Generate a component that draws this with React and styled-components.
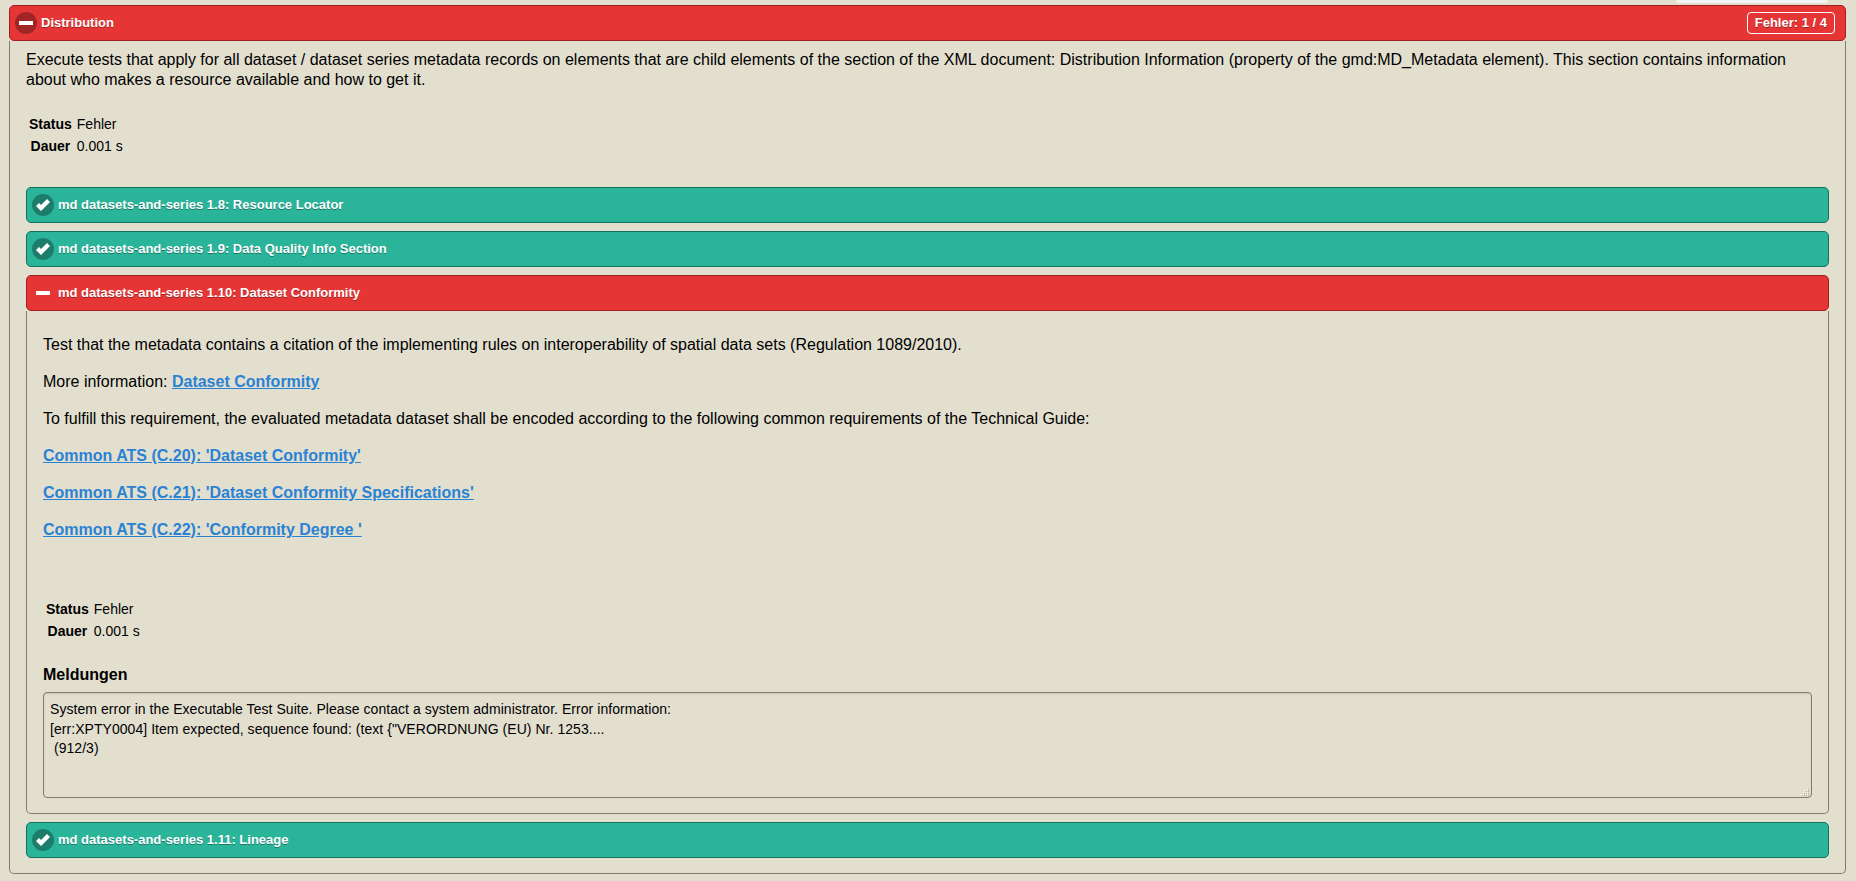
import React from "react";
import styled, { createGlobalStyle } from "styled-components";

const Global = createGlobalStyle`
  html, body { margin: 0; padding: 0; background: #e3dfcf; }
  body { font-family: "Liberation Sans", Arial, sans-serif; font-size: 16px; color: #000; overflow: hidden; }
`;

const Page = styled.div`
  height: 881px;
  padding: 0 10px 0 9px;
  box-sizing: border-box;
`;

const TopStrip = styled.div`
  height: 5px;
  display: flex;
  justify-content: flex-end;
`;

const Notice = styled.div`
  width: 152px;
  height: 3px;
  margin-right: 18px;
  background: #f4f4f2;
  border-radius: 0 0 4px 4px;
`;

const Collapsible = styled.section`
  margin-bottom: ${(p) => p.$gap || 0}px;
`;

const Header = styled.h3`
  margin: 0;
  height: 36px;
  box-sizing: border-box;
  display: flex;
  align-items: center;
  gap: 4px;
  padding: 0 ${(p) => (p.$outer ? 10 : 6)}px 0 5px;
  border: 1px solid ${(p) => (p.$failed ? "#a11f1f" : "#14705f")};
  border-radius: 5px;
  background: ${(p) => (p.$failed ? "#e63535" : "#2ab49a")};
  color: #fff;
  font-size: 13px;
  font-weight: 700;
  text-shadow: 0 1px 0 rgba(0, 0, 0, 0.35);
`;

const IconDisc = styled.span`
  flex: none;
  width: 22px;
  height: 22px;
  border-radius: 50%;
  background: ${(p) => (p.$plain ? "transparent" : "rgba(0,0,0,0.3)")};
  display: flex;
  align-items: center;
  justify-content: center;
`;

const Title = styled.span`
  flex: 1;
  padding-bottom: 2px;
`;

const Badge = styled.span`
  border: 1px solid #fff;
  border-radius: 4px;
  height: 22px;
  box-sizing: border-box;
  padding: 0 7px 2px;
  display: flex;
  align-items: center;
`;

const Body = styled.div`
  box-sizing: border-box;
  border: 1px solid #7f7d72;
  border-top: 0;
  border-radius: 0 0 5px 5px;
  padding: ${(p) => p.$pt}px 16px ${(p) => p.$pb}px;
`;

const Intro = styled.p`
  margin: 0;
  line-height: 20px;
  font-size: 16px;
`;

const Para = styled.p`
  margin: 0 0 16px;
  line-height: 21px;
  font-size: 16px;
`;

const Link = styled.a`
  color: #2a82d4;
  font-weight: 700;
  text-decoration: underline;
`;

const Facts = styled.table`
  border-spacing: 0;
  font-size: 14px;
  margin: ${(p) => p.$mt}px 0 ${(p) => p.$mb}px 3px;
  th {
    font-weight: 700;
    text-align: center;
    padding: 0 5px 0 0;
    height: 22px;
  }
  td {
    padding: 0;
  }
`;

const Heading = styled.h4`
  margin: 0 0 7px;
  font-size: 16px;
  line-height: 20px;
  font-weight: 700;
`;

const MessageBox = styled.div`
  position: relative;
`;

const Messages = styled.textarea`
  display: block;
  width: 100%;
  height: 106px;
  box-sizing: border-box;
  margin: 0;
  padding: 7px 6px;
  border: 1px solid #7f7d72;
  border-radius: 4px;
  background: #e3dfcf;
  box-shadow: inset 0 1px 2px rgba(0, 0, 0, 0.1);
  color: #000;
  font-family: "Liberation Sans", Arial, sans-serif;
  font-size: 14px;
  line-height: 19.6px;
  letter-spacing: 0.05px;
  outline: 0;
  resize: none;
`;

const Grip = styled.svg`
  position: absolute;
  right: 2px;
  bottom: 2px;
  width: 9px;
  height: 9px;
  pointer-events: none;
`;

const Check = () => (
  <svg width="14" height="14" viewBox="0 0 14 14" aria-hidden="true">
    <polygon fill="#fff" points="14,4 11,1 5.003,6.997 3,5 0,8 4.966,13 4.983,12.984 5,13" />
  </svg>
);
const Minus = () => (
  <svg width="14" height="14" viewBox="0 0 14 14" aria-hidden="true">
    <rect fill="#fff" x="0" y="5" width="14" height="4" />
  </svg>
);

const gripDots = [[6, 1], [6, 3], [4, 3], [6, 5], [4, 5], [2, 5], [6, 7], [4, 7], [2, 7], [0, 7]];

const message = `System error in the Executable Test Suite. Please contact a system administrator. Error information:
[err:XPTY0004] Item expected, sequence found: (text {"VERORDNUNG (EU) Nr. 1253....
 (912/3)`;

const Passed = ({ title, gap }) => (
  <Collapsible $gap={gap}>
    <Header>
      <IconDisc><Check /></IconDisc>
      <Title>{title}</Title>
    </Header>
  </Collapsible>
);

export default function App() {
  return (
    <Page>
      <Global />
      <TopStrip><Notice /></TopStrip>
      <Collapsible>
        <Header $failed $outer>
          <IconDisc><Minus /></IconDisc>
          <Title>Distribution</Title>
          <Badge>Fehler: 1 / 4</Badge>
        </Header>
        <Body $pt={9} $pb={15}>
          <Intro>
            Execute tests that apply for all dataset / dataset series metadata records on elements that are child elements of the section of the XML document: Distribution Information (property of the gmd:MD_Metadata element). This section contains information about who makes a resource available and how to get it.
          </Intro>
          <Facts $mt={23} $mb={30}>
            <tbody>
              <tr><th>Status</th><td>Fehler</td></tr>
              <tr><th>Dauer</th><td>0.001 s</td></tr>
            </tbody>
          </Facts>
          <Passed title="md datasets-and-series 1.8: Resource Locator" gap={8} />
          <Passed title="md datasets-and-series 1.9: Data Quality Info Section" gap={8} />
          <Collapsible $gap={8}>
            <Header $failed>
              <IconDisc $plain><Minus /></IconDisc>
              <Title>md datasets-and-series 1.10: Dataset Conformity</Title>
            </Header>
            <Body $pt={23} $pb={15}>
              <Para>Test that the metadata contains a citation of the implementing rules on interoperability of spatial data sets (Regulation 1089/2010).</Para>
              <Para>More information: <Link href="#">Dataset Conformity</Link></Para>
              <Para>To fulfill this requirement, the evaluated metadata dataset shall be encoded according to the following common requirements of the Technical Guide:</Para>
              <Para><Link href="#">Common ATS (C.20): 'Dataset Conformity'</Link></Para>
              <Para><Link href="#">Common ATS (C.21): 'Dataset Conformity Specifications'</Link></Para>
              <Para><Link href="#">Common ATS (C.22): 'Conformity Degree '</Link></Para>
              <Facts $mt={58} $mb={23}>
                <tbody>
                  <tr><th>Status</th><td>Fehler</td></tr>
                  <tr><th>Dauer</th><td>0.001 s</td></tr>
                </tbody>
              </Facts>
              <Heading>Meldungen</Heading>
              <MessageBox>
                <Messages readOnly defaultValue={message} />
                <Grip viewBox="0 0 9 9" aria-hidden="true">
                  {gripDots.map(([x, y]) => (
                    <g key={`${x}-${y}`}>
                      <rect x={x + 1} y={y + 1} width="1" height="1" fill="#a9a79c" />
                      <rect x={x} y={y} width="1" height="1" fill="#f6f5ef" />
                    </g>
                  ))}
                </Grip>
              </MessageBox>
            </Body>
          </Collapsible>
          <Passed title="md datasets-and-series 1.11: Lineage" />
        </Body>
      </Collapsible>
    </Page>
  );
}
